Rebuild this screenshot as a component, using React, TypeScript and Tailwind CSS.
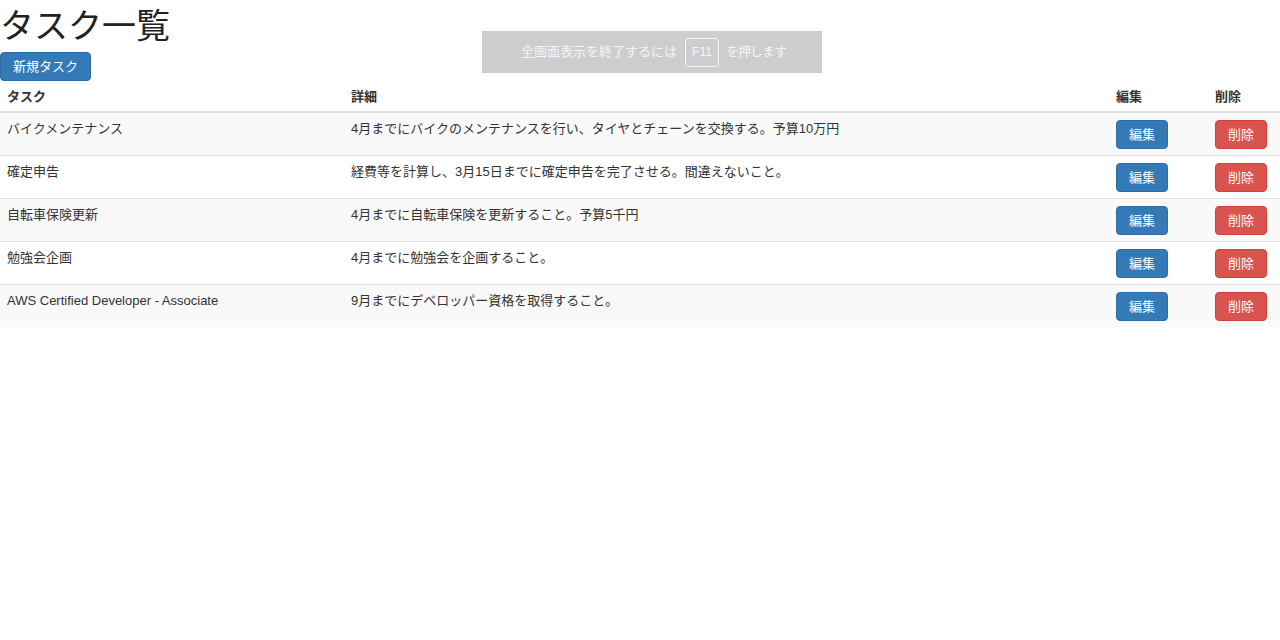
import React from "react";

const rows = [
  { task: "バイクメンテナンス", detail: "4月までにバイクのメンテナンスを行い、タイヤとチェーンを交換する。予算10万円" },
  { task: "確定申告", detail: "経費等を計算し、3月15日までに確定申告を完了させる。間違えないこと。" },
  { task: "自転車保険更新", detail: "4月までに自転車保険を更新すること。予算5千円" },
  { task: "勉強会企画", detail: "4月までに勉強会を企画すること。" },
  { task: "AWS Certified Developer - Associate", detail: "9月までにデベロッパー資格を取得すること。" },
];

export default function App() {
  return (
    <div
      className="relative min-h-[640px] bg-white text-[#333] text-[13px]"
      style={{ fontFamily: '"Liberation Sans", "Noto Sans CJK JP", sans-serif' }}
    >
      <h1 className="h-[52px] leading-[52px] text-[34px] font-normal m-0 text-[#222]">タスク一覧</h1>
      <button className="h-[29px] w-[91px] rounded-[4px] border border-[#2e6da4] bg-[#337ab7] text-white text-[13px] leading-[17px]">
        新規タスク
      </button>
      <table className="w-full table-fixed border-collapse">
        <thead>
          <tr className="border-b-2 border-[#ddd]">
            <th className="w-[344px] text-left font-bold pl-[7px] pt-[6px] pb-[5px] leading-[19px]">タスク</th>
            <th className="text-left font-bold pl-[7px] pt-[6px] pb-[5px] leading-[19px]">詳細</th>
            <th className="w-[99px] text-left font-bold pl-[7px] pt-[6px] pb-[5px] leading-[19px]">編集</th>
            <th className="w-[72px] text-left font-bold pl-[7px] pt-[6px] pb-[5px] leading-[19px]">削除</th>
          </tr>
        </thead>
        <tbody>
          {rows.map((r, i) => (
            <tr key={i} className={`border-t border-[#ddd] first:border-t-0 ${i % 2 === 0 ? "bg-[#f9f9f9]" : "bg-white"}`}>
              <td className="align-top pl-[7px] pt-[7px] pb-[6px] leading-[17px]">{r.task}</td>
              <td className="align-top pl-[7px] pt-[7px] pb-[6px] leading-[17px]">{r.detail}</td>
              <td className="align-top pl-[7px] pt-[7px] pb-[6px]">
                <button className="block h-[29px] w-[52px] rounded-[4px] border border-[#2e6da4] bg-[#337ab7] text-white text-[13px] leading-[17px]">
                  編集
                </button>
              </td>
              <td className="align-top pl-[7px] pt-[7px] pb-[6px]">
                <button className="block h-[29px] w-[52px] rounded-[4px] border border-[#d43f3a] bg-[#d9534f] text-white text-[13px] leading-[17px]">
                  削除
                </button>
              </td>
            </tr>
          ))}
        </tbody>
      </table>
      <div className="absolute left-[482px] top-[31px] w-[340px] h-[42px] bg-[#cdcdcf] flex items-center pl-[39px] text-[#f4f4f4] text-[13px]">
        <span>全画面表示を終了するには</span>
        <span className="ml-[8px] mr-[7px] h-[29px] w-[34px] border border-[#f4f4f4] rounded-[3px] flex items-center justify-center text-[12px]">F11</span>
        <span className="tracking-[-1px]">を押します</span>
      </div>
    </div>
  );
}
